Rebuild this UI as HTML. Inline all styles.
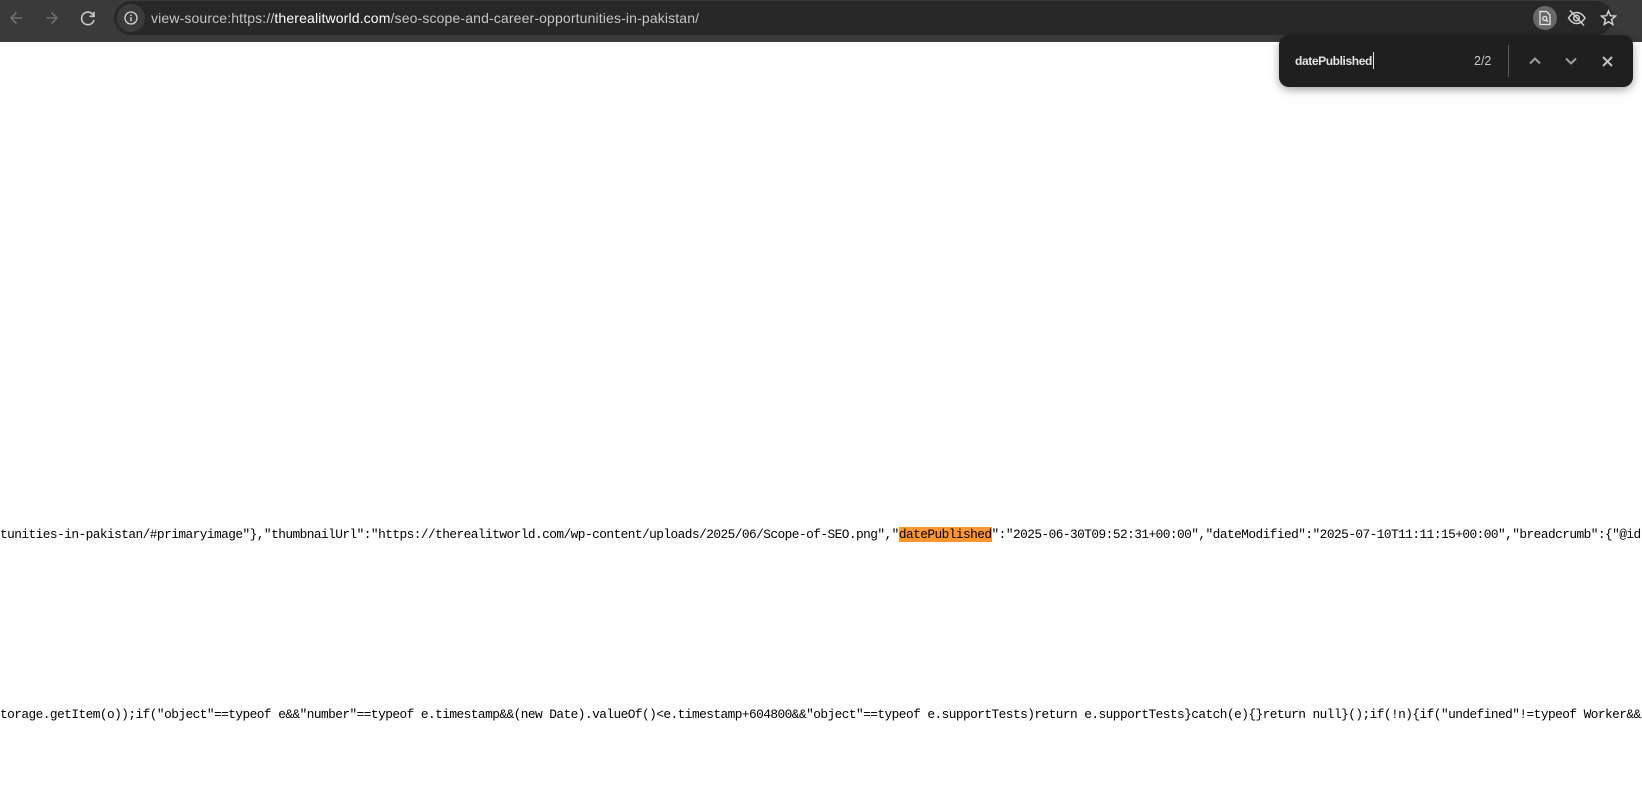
<!DOCTYPE html>
<html><head><meta charset="utf-8"><title>view-source</title>
<style>
html,body{margin:0;padding:0;width:1642px;height:792px;overflow:hidden;background:#fff}
#bar{position:absolute;left:0;top:0;width:1642px;height:42px;background:#3a3a3a}
#omni{position:absolute;left:114px;top:1px;width:1499px;height:34px;background:#282828;border-radius:17px}
#info{position:absolute;left:117px;top:4px;width:28px;height:28px;border-radius:50%;background:#3b3b3b}
#url{position:absolute;left:151px;top:9px;font:14px/18px "Liberation Sans",sans-serif;color:#c4c7c5;white-space:nowrap;letter-spacing:.14px}
#url b{font-weight:normal;color:#fff}
svg{position:absolute;overflow:visible}
#find{position:absolute;left:1279px;top:35px;width:354px;height:52px;background:#1f1f1f;border-radius:10px;box-shadow:0 3px 9px rgba(0,0,0,.35)}
#q{position:absolute;left:16px;top:17px;font:bold 12px/18px "Liberation Sans",sans-serif;letter-spacing:-.39px;color:#e3e3e3;white-space:nowrap}
#caret{position:absolute;left:94px;top:17px;width:1px;height:17px;background:#e3e3e3}
#cnt{position:absolute;left:195px;top:17px;font:12.5px/18px "Liberation Sans",sans-serif;color:#c7c7c7}
#sep{position:absolute;left:229px;top:10px;width:1px;height:32px;background:#5c5c5c}
.l{position:absolute;left:0;white-space:pre;font:12.8px/17px "Liberation Mono",monospace;letter-spacing:-.546px;color:#000}
mark{background:#ff9632;color:#000;padding:0}
</style></head><body>
<div id="bar"></div>
<div id="omni"></div>
<div id="info"></div>
<svg style="left:0;top:0" width="110" height="40" fill="none" stroke-width="1.6">
<path d="M22 18H11M16.500 12.500 11 18l5.500 5.500" stroke="#6f6f6f"/>
<path d="M46 18H57M51.500 12.500 57 18l-5.500 5.500" stroke="#6f6f6f"/>
<path d="M93.500 15.500A6.300 6.300 0 1 0 94 20" stroke="#c8c8c8"/>
<path d="M94 11.800V16.300H89.500" stroke="#c8c8c8"/>
</svg>
<svg style="left:124px;top:11px" width="14" height="14" fill="none">
<circle cx="7" cy="7" r="6" stroke="#d6d6d6" stroke-width="1.300"/>
<path d="M7 6.200V10.300" stroke="#d6d6d6" stroke-width="1.400"/>
<path d="M7 3.600V5" stroke="#d6d6d6" stroke-width="1.400"/>
</svg>
<div id="url">view-source:https://<b>therealitworld.com</b>/seo-scope-and-career-opportunities-in-pakistan/</div>
<svg style="left:1533px;top:6px" width="24" height="24" fill="none">
<circle cx="12" cy="12" r="12" fill="#686868"/>
<path d="M7 5.500H13.500L17 9V18.500H7Z" stroke="#e3e3e3" stroke-width="1.300"/>
<circle cx="11.800" cy="12.500" r="2" stroke="#e3e3e3" stroke-width="1.300"/>
<path d="M13.300 14 15 15.800" stroke="#e3e3e3" stroke-width="1.300"/>
</svg>
<svg style="left:1567px;top:9px" width="20" height="18" fill="none" stroke="#d0d0d0" stroke-width="1.500">
<path d="M1.500 9C4 5 7 3.500 9.500 3.500S15.500 5 18 9C15.500 13 12.500 14.500 9.500 14.500S4 13 1.500 9Z"/>
<circle cx="9.500" cy="9" r="2.800"/>
<path d="M3 1.500 17 16.500"/>
</svg>
<svg style="left:1600px;top:9px" width="18" height="18" fill="none" stroke="#d0d0d0" stroke-width="1.500">
<path d="M8.500 2 10.400 6.700 15.500 7.100 11.600 10.400 12.800 15.400 8.500 12.700 4.200 15.400 5.400 10.400 1.500 7.100 6.600 6.700Z"/>
</svg>
<div id="find">
<div id="q">datePublished</div><div id="caret"></div>
<div id="cnt">2/2</div><div id="sep"></div>
<svg style="left:0;top:0" width="354" height="52" fill="none" stroke-width="2">
<path d="M251 28.500 256 23.500 261 28.500" stroke="#a0a0a0"/>
<path d="M287 23.500 292 28.500 297 23.500" stroke="#a0a0a0"/>
<path d="M324 22 333 31M333 22 324 31" stroke="#c0c0c0"/>
</svg>
</div>
<div class="l" style="top:526px">tunities-in-pakistan/#primaryimage"},"thumbnailUrl":"https://therealitworld.com/wp-content/uploads/2025/06/Scope-of-SEO.png","<mark>datePublished</mark>":"2025-06-30T09:52:31+00:00","dateModified":"2025-07-10T11:11:15+00:00","breadcrumb":{"@id</div>
<div class="l" style="top:706px">torage.getItem(o));if("object"==typeof e&amp;&amp;"number"==typeof e.timestamp&amp;&amp;(new Date).valueOf()&lt;e.timestamp+604800&amp;&amp;"object"==typeof e.supportTests)return e.supportTests}catch(e){}return null}();if(!n){if("undefined"!=typeof Worker&amp;&amp;</div>
</body></html>
